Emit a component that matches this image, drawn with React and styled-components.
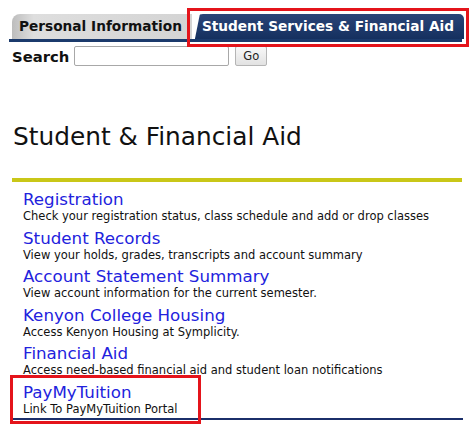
import styled, { createGlobalStyle } from 'styled-components'

const GlobalStyle = createGlobalStyle`
	body {
		margin: 0;
		background: #ffffff;
		font-family: 'DejaVu Sans', Verdana, sans-serif;
	}
`

const links = [
	{ title: 'Registration', desc: 'Check your registration status, class schedule and add or drop classes' },
	{ title: 'Student Records', desc: 'View your holds, grades, transcripts and account summary' },
	{ title: 'Account Statement Summary', desc: 'View account information for the current semester.' },
	{ title: 'Kenyon College Housing', desc: 'Access Kenyon Housing at Symplicity.' },
	{ title: 'Financial Aid', desc: 'Access need-based financial aid and student loan notifications' },
	{ title: 'PayMyTuition', desc: 'Link To PayMyTuition Portal', marked: true },
]

const App = () => {
	return (
		<S.Page>
			<GlobalStyle />
			<S.TabBar>
				<S.Tab>Personal Information</S.Tab>
				<S.Marked>
					<S.Tab $active>Student Services &amp; Financial Aid</S.Tab>
				</S.Marked>
			</S.TabBar>
			<S.SearchRow>
				<S.Label>Search</S.Label>
				<S.Input type="text" />
				<S.GoButton>Go</S.GoButton>
			</S.SearchRow>
			<S.Heading>Student &amp; Financial Aid</S.Heading>
			<S.Rule />
			<S.MenuList>
				{links.map(item => (
					<S.MenuItem key={item.title} $marked={item.marked}>
						<S.MenuLink href="#">{item.title}</S.MenuLink>
						<S.MenuDesc>{item.desc}</S.MenuDesc>
					</S.MenuItem>
				))}
			</S.MenuList>
			<S.BottomRule />
		</S.Page>
	)
}

export default App

const Page = styled.div`
	width: 474px;
	height: 424px;
	padding: 14px 0 0 0;
	box-sizing: border-box;
	overflow: hidden;
`

const TabBar = styled.div`
	display: flex;
	align-items: flex-end;
	margin: 0 12px 0 9px;
	padding-left: 3px;
	border-bottom: 3px solid #1b3a6c;
	height: 25px;
`

const Tab = styled.div`
	height: 25px;
	box-sizing: border-box;
	padding: 4px 10px 0 7px;
	font-size: 13.7px;
	font-weight: bold;
	white-space: nowrap;
	color: ${({ $active }) => ($active ? '#ffffff' : '#111111')};
	background: ${({ $active }) =>
		$active
			? 'linear-gradient(#2a4478, #15305f)'
			: 'linear-gradient(90deg, #bdbdbd, #dedede 12%, #d4d4d4)'};
	border-top-left-radius: 8px;
	border-top-right-radius: ${({ $active }) => ($active ? '5px' : '0')};
	clip-path: ${({ $active }) =>
		$active ? 'polygon(5px 0, 100% 0, 100% 100%, 0 100%)' : 'none'};
`

const Marked = styled.div`
	margin-left: 3px;
	position: relative;
	&::after {
		content: '';
		position: absolute;
		left: -8px;
		right: -5px;
		top: -6px;
		bottom: -8px;
		border: 3px solid #e4141b;
		pointer-events: none;
	}
`

const SearchRow = styled.div`
	display: flex;
	align-items: center;
	margin: 4px 0 0 12px;
`

const Label = styled.span`
	font-size: 14.8px;
	font-weight: bold;
	color: #111111;
`

const Input = styled.input`
	width: 155px;
	height: 20px;
	box-sizing: border-box;
	border: 1px solid #a8a8a8;
	border-radius: 2px;
	margin: 0 6px 0 5px;
`

const GoButton = styled.button`
	width: 32px;
	height: 20px;
	padding: 0;
	font-family: 'DejaVu Sans', Verdana, sans-serif;
	font-size: 11.5px;
	color: #222222;
	background: linear-gradient(#f8f8f8, #e2e2e2);
	border: 1px solid #b5b5b5;
	border-radius: 2px;
`

const Heading = styled.h1`
	margin: 56px 0 0 13px;
	font-size: 24.8px;
	font-weight: normal;
	color: #111111;
	line-height: 30px;
`

const Rule = styled.div`
	margin: 26px 12px 0 12px;
	height: 4px;
	background: #c9c718;
`

const MenuList = styled.div`
	display: flex;
	flex-direction: column;
	margin: 8px 0 0 12px;
`

const MenuItem = styled.div`
	display: flex;
	flex-direction: column;
	height: 38.5px;
	padding-left: 11px;
	position: relative;
	${({ $marked }) =>
		$marked &&
		`
		&::after {
			content: '';
			position: absolute;
			left: -2px;
			top: -8px;
			width: 191px;
			height: 49px;
			box-sizing: border-box;
			border: 3px solid #e4141b;
			z-index: 2;
		}
	`}
`

const MenuLink = styled.a`
	font-size: 16.7px;
	line-height: 19px;
	color: #2222dd;
	text-decoration: none;
`

const MenuDesc = styled.div`
	font-size: 11.5px;
	line-height: 14px;
	color: #111111;
`

const BottomRule = styled.div`
	margin: -3px 11px 0 12px;
	height: 2px;
	background: #1b2f6a;
`

const S = {
	Page,
	TabBar,
	Tab,
	Marked,
	SearchRow,
	Label,
	Input,
	GoButton,
	Heading,
	Rule,
	MenuList,
	MenuItem,
	MenuLink,
	MenuDesc,
	BottomRule,
}
